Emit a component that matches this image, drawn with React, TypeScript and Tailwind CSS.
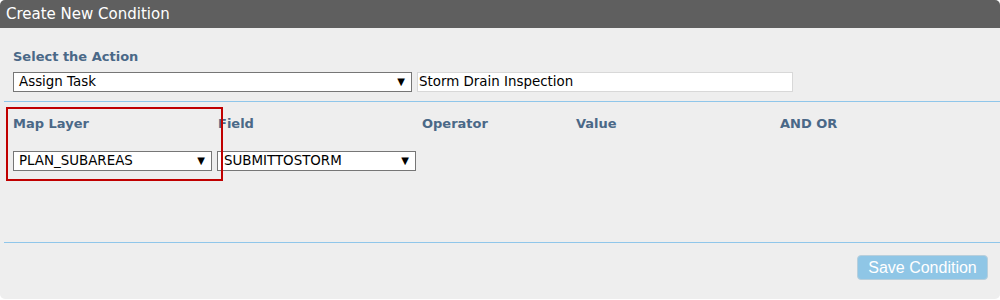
import { ReactNode } from 'react';

const font = { fontFamily: '"DejaVu Sans", Verdana, sans-serif' };

function FakeSelect({ value, className }: { value: string; className: string }) {
  return (
    <div
      className={`flex h-[20px] items-center justify-between border border-[#767676] bg-white pl-[5px] pr-[6px] text-[13.4px] text-black ${className}`}
    >
      <span className="leading-none">{value}</span>
      <span className="text-[10px] leading-none">▼</span>
    </div>
  );
}

function Label({ children, className }: { children: ReactNode; className: string }) {
  return <div className={`text-[13px] font-bold text-[#4a6887] ${className}`}>{children}</div>;
}

export default function App() {
  return (
    <div className="h-[300px] w-[1000px] bg-white" style={font}>
      <div className="relative flex h-[299px] flex-col overflow-hidden rounded-[5px] bg-[#eeeeee]">
        <div className="flex h-[28px] items-center bg-[#5f5f5f] pl-[6px] text-[15px] text-white">
          Create New Condition
        </div>

        <div className="px-[13px] pt-[19px]">
          <Label className="leading-[19px]">Select the Action</Label>
          <div className="mt-[6px] flex gap-[5px]">
            <FakeSelect value="Assign Task" className="w-[399px]" />
            <div className="flex h-[20px] w-[376px] items-center border border-[#d8d8d8] bg-white pl-[1px] text-[13.4px] text-black">
              Storm Drain Inspection
            </div>
          </div>
        </div>

        <div className="ml-[4px] mt-[9px] h-[1px] bg-[#8fc6ea]" />

        <div className="flex px-[13px] pt-[12px]">
          <Label className="w-[205px]">Map Layer</Label>
          <Label className="w-[204px]">Field</Label>
          <Label className="w-[154px]">Operator</Label>
          <Label className="w-[204px]">Value</Label>
          <Label className="">AND OR</Label>
        </div>

        <div className="flex gap-[5px] px-[13px] pt-[17px]">
          <FakeSelect value="PLAN_SUBAREAS" className="w-[199px]" />
          <FakeSelect value="SUBMITTOSTORM" className="w-[199px] pl-[6px]" />
        </div>

        <div className="absolute left-[6px] top-[107px] h-[74px] w-[217px] border-2 border-[#c00000]" />

        <div className="ml-[4px] mt-[71px] h-[1px] bg-[#8fc6ea]" />

        <div className="flex justify-end pr-[12px] pt-[12px]">
          <button
            className="h-[25px] w-[131px] rounded-[4px] border border-[#b8cfdc] bg-[#8fc6e6] text-[16px] text-white"
            style={{ fontFamily: '"Liberation Sans", Arial, sans-serif' }}
          >
            Save Condition
          </button>
        </div>
      </div>
    </div>
  );
}
